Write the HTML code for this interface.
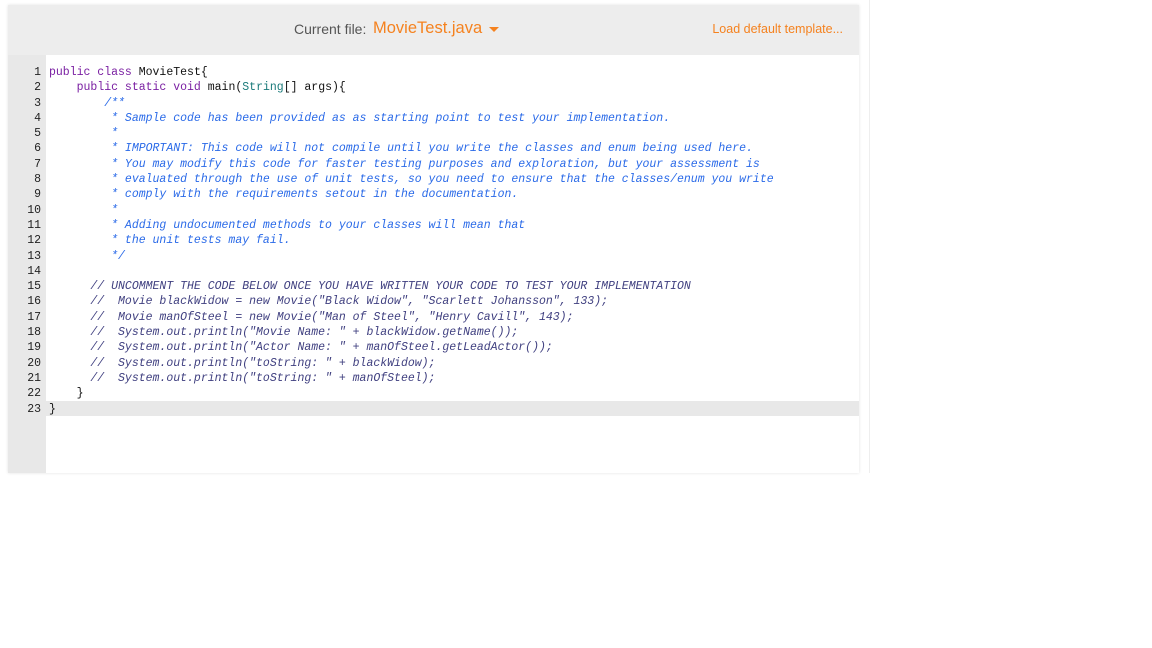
<!DOCTYPE html><html><head><style>
body{margin:0;width:1152px;height:648px;background:#fff;position:relative;overflow:hidden;font-family:"Liberation Sans",sans-serif}
.vl{position:absolute;left:869px;top:0;width:1px;height:473px;background:#eee}
.panel{position:absolute;left:8px;top:5px;width:851px;height:468px;background:#fff;box-shadow:0 0 3px rgba(0,0,0,.12)}
.hdr{position:absolute;left:0;top:0;width:851px;height:50px;background:#ededed}
.cf{position:absolute;left:286px;top:16px;font-size:14px;color:#555}
.fn{position:absolute;left:365px;top:14px;font-size:16.5px;color:#f5821f}
.tri{position:absolute;left:481px;top:22px;width:0;height:0;border-left:5px solid transparent;border-right:5px solid transparent;border-top:5px solid #f5821f}
.ld{position:absolute;right:16px;top:17px;font-size:12.5px;color:#f5821f}
.gut{position:absolute;left:0;top:50px;width:38px;height:418px;background:#e8e8e8}
.hl{position:absolute;left:0;top:396px;width:851px;height:15px;background:#e8e8e8}
.code{position:absolute;left:0;top:60px;font-family:"Liberation Mono","DejaVu Sans Mono",monospace;font-size:11.5px;line-height:15.3px;white-space:pre;color:#111}
.ln{display:inline-block;width:33px;text-align:right;color:#222;margin-right:8px}
.k{color:#7a1fa2}.t{color:#1a7a7a}.c{color:#2a6ae8;font-style:italic}.g{color:#404080;font-style:italic}
</style></head><body>
<div class="vl"></div>
<div class="panel">
<div class="hdr"><span class="cf">Current file:</span><span class="fn">MovieTest.java</span><div class="tri"></div><span class="ld">Load default template...</span></div>
<div class="gut"></div><div class="hl"></div>
<div class="code"><span class="ln">1</span><span class="k">public class</span> MovieTest{
<span class="ln">2</span>    <span class="k">public static void</span> main(<span class="t">String</span>[] args){
<span class="ln">3</span><span class="c">        /**</span>
<span class="ln">4</span><span class="c">         * Sample code has been provided as as starting point to test your implementation.</span>
<span class="ln">5</span><span class="c">         *</span>
<span class="ln">6</span><span class="c">         * IMPORTANT: This code will not compile until you write the classes and enum being used here.</span>
<span class="ln">7</span><span class="c">         * You may modify this code for faster testing purposes and exploration, but your assessment is</span>
<span class="ln">8</span><span class="c">         * evaluated through the use of unit tests, so you need to ensure that the classes/enum you write</span>
<span class="ln">9</span><span class="c">         * comply with the requirements setout in the documentation.</span>
<span class="ln">10</span><span class="c">         *</span>
<span class="ln">11</span><span class="c">         * Adding undocumented methods to your classes will mean that</span>
<span class="ln">12</span><span class="c">         * the unit tests may fail.</span>
<span class="ln">13</span><span class="c">         */</span>
<span class="ln">14</span>
<span class="ln">15</span><span class="g">      // UNCOMMENT THE CODE BELOW ONCE YOU HAVE WRITTEN YOUR CODE TO TEST YOUR IMPLEMENTATION</span>
<span class="ln">16</span><span class="g">      //  Movie blackWidow = new Movie("Black Widow", "Scarlett Johansson", 133);</span>
<span class="ln">17</span><span class="g">      //  Movie manOfSteel = new Movie("Man of Steel", "Henry Cavill", 143);</span>
<span class="ln">18</span><span class="g">      //  System.out.println("Movie Name: " + blackWidow.getName());</span>
<span class="ln">19</span><span class="g">      //  System.out.println("Actor Name: " + manOfSteel.getLeadActor());</span>
<span class="ln">20</span><span class="g">      //  System.out.println("toString: " + blackWidow);</span>
<span class="ln">21</span><span class="g">      //  System.out.println("toString: " + manOfSteel);</span>
<span class="ln">22</span>    }
<span class="ln">23</span>}</div>
</div>
</body></html>
